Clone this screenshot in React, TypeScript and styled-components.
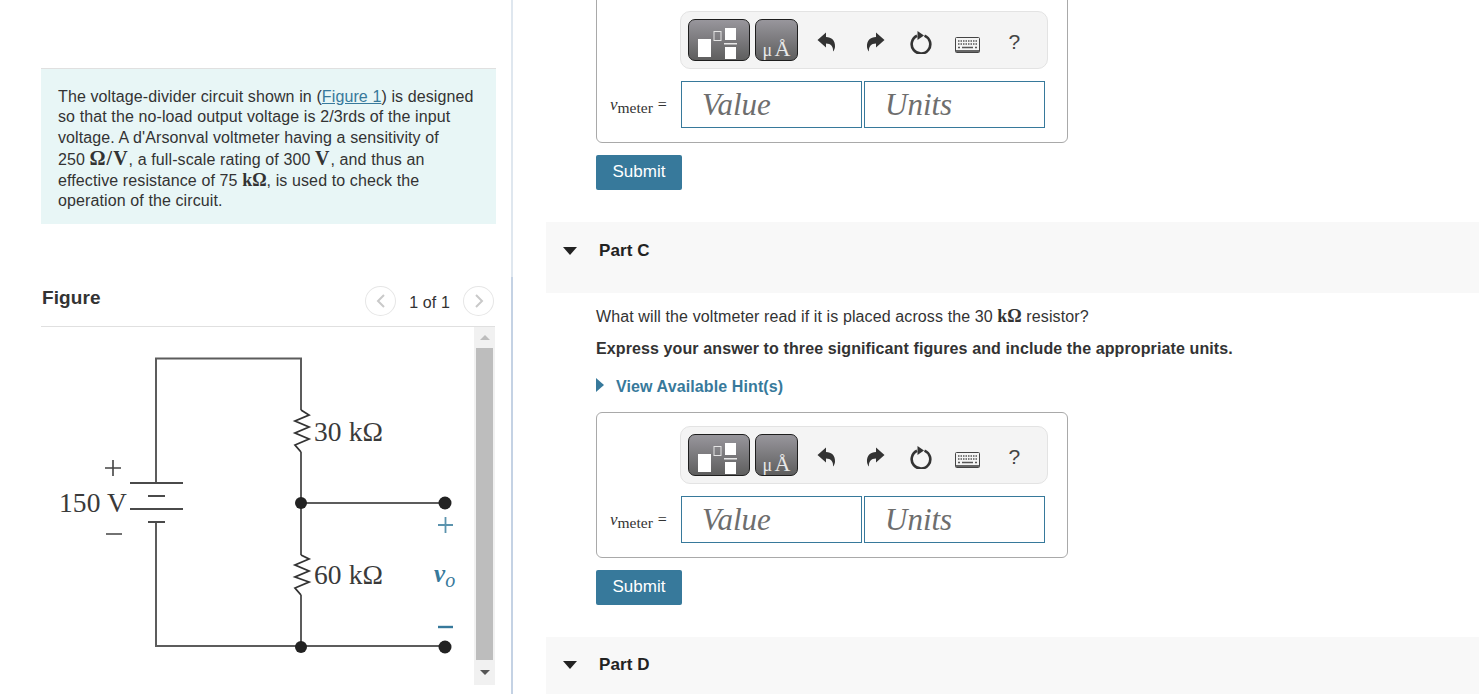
import React from 'react';
import styled, { createGlobalStyle } from 'styled-components';

const GlobalStyle = createGlobalStyle`
  html, body {
    margin: 0;
    padding: 0;
    background: #fff;
    overflow: hidden;
  }
  * {
    box-sizing: border-box;
  }
`;

const Page = styled.div`
  display: flex;
  width: 1479px;
  height: 694px;
  overflow: hidden;
  font-family: "Liberation Sans", Arial, sans-serif;
  font-size: 16px;
  letter-spacing: 0.11px;
  color: #333;
`;

const LeftPanel = styled.div`
  position: relative;
  flex: none;
  width: 513px;
  padding: 68px 16px 0 41px;
  border-right: 2px solid #dfe7ef;

  &::after {
    content: '';
    position: absolute;
    top: 277px;
    bottom: 0;
    right: -2px;
    width: 2px;
    background: #c4d2e4;
  }
`;

const IntroCard = styled.div`
  height: 156px;
  margin-right: -1px;
  padding: 18px 16px 0 17px;
  background: #e8f6f6;
  border-top: 1px solid #e0e0e0;
  line-height: 20.4px;
`;

const FigureLink = styled.a`
  color: #37799b;
  text-decoration: underline;
`;

const MathUnit = styled.span<{ $wide?: boolean }>`
  font-family: "Liberation Serif", serif;
  font-weight: bold;
  font-size: ${props => (props.$wide ? 20 : 18)}px;
  letter-spacing: ${props => (props.$wide ? 1 : 0)}px;
  line-height: 1;
  white-space: nowrap;
`;

const FigureHeader = styled.div`
  display: flex;
  align-items: center;
  justify-content: space-between;
  height: 103px;
  padding-top: 52px;
  padding-left: 1px;
  border-bottom: 1px solid #e0e0e0;
`;

const FigureTitle = styled.div`
  font-size: 19px;
  font-weight: bold;
  margin-top: -7px;
`;

const Pager = styled.div`
  display: flex;
  align-items: center;
  gap: 13px;
  margin-right: 1px;
`;

const PagerLabel = styled.span`
  margin-top: 3px;
`;

const PagerButton = styled.span`
  display: flex;
  align-items: center;
  justify-content: center;
  width: 31px;
  height: 30px;
  border: 1px solid #e6e6e6;
  border-radius: 50%;
`;

const FigureBody = styled.div`
  display: flex;
  height: 358px;
`;

const CircuitWrap = styled.div`
  flex: 1;
  min-width: 0;
`;

const ScrollTrack = styled.div`
  display: flex;
  flex-direction: column;
  align-items: center;
  flex: none;
  width: 21px;
  height: 358px;
  background: #f1f1f1;
`;

const ScrollButton = styled.div<{ $h: number }>`
  display: flex;
  align-items: center;
  justify-content: center;
  flex: none;
  width: 100%;
  height: ${props => props.$h}px;
`;

const ScrollThumb = styled.div`
  flex: none;
  width: 17px;
  height: 312px;
  background: #bdbdbd;
`;

const RightPanel = styled.div`
  flex: 1;
  min-width: 0;
  padding-left: 33px;
`;

const PartBody = styled.div`
  padding-left: 50px;
`;

const AnswerBox = styled.div<{ $top: number; $pad: number }>`
  width: 472px;
  height: ${props => props.$pad + 133}px;
  margin-top: ${props => props.$top}px;
  padding: ${props => props.$pad}px 0 0 84px;
  border: 1px solid #a9a9a9;
  border-radius: 6px;
`;

const Toolbar = styled.div`
  display: flex;
  align-items: center;
  width: 368px;
  height: 58px;
  margin-left: -1px;
  padding-left: 7px;
  background: #f4f4f4;
  border: 1px solid #e3e3e3;
  border-radius: 10px;
`;

const TemplateButton = styled.div<{ $w: number }>`
  display: flex;
  align-items: center;
  justify-content: center;
  flex: none;
  width: ${props => props.$w}px;
  height: 42px;
  margin-right: 5px;
  background: linear-gradient(#98969c, #5e5e5e);
  border: 1px solid #1e1e1e;
  border-radius: 7px;
`;

const UnitGlyphs = styled.div`
  display: flex;
  align-items: baseline;
  gap: 2px;
  margin-top: 17px;
  font-family: "Liberation Serif", serif;
  color: #e8e8e8;
  line-height: 1;
`;

const MicroGlyph = styled.span`
  font-size: 18px;
`;

const AngstromGlyph = styled.span`
  font-size: 22px;
`;

const ToolCell = styled.div<{ $drop: number }>`
  display: flex;
  align-items: center;
  justify-content: center;
  flex: none;
  width: 47px;
  height: 100%;
  padding-top: ${props => props.$drop}px;
  color: #333;
`;

const HelpGlyph = styled.span`
  font-size: 21px;
  color: #444;
`;

const AnswerRow = styled.div`
  display: flex;
  align-items: center;
  margin-top: 12px;
`;

const AnswerLabel = styled.div`
  flex: none;
  width: 73px;
  margin-left: -84px;
  margin-right: 11px;
  padding-left: 13px;
  font-family: "Liberation Serif", serif;
  font-size: 16px;
  letter-spacing: 0;
  white-space: nowrap;
`;

const Italic = styled.i`
  font-size: 17px;
`;

const Sub = styled.sub`
  font-size: 15.5px;
  line-height: 0;
  vertical-align: -3px;
`;

const EqualsSign = styled.span`
  margin-left: 5px;
`;

const AnswerInput = styled.input`
  flex: none;
  width: 181px;
  height: 47px;
  margin-right: 2px;
  padding: 0 0 0 20px;
  background: #fff;
  border: 1px solid #37799b;
  border-radius: 0;
  outline: none;
  font-family: "Liberation Serif", serif;
  font-size: 31px;
  font-style: italic;

  &::placeholder {
    color: #6e6e6e;
    opacity: 1;
  }
`;

const SubmitButton = styled.button`
  display: block;
  width: 86px;
  height: 35px;
  margin-top: 12px;
  padding: 0 0 2px;
  background: #37799b;
  border: none;
  border-radius: 2px;
  color: #fff;
  font-family: "Liberation Sans", Arial, sans-serif;
  font-size: 17px;
`;

const PartHeader = styled.div<{ $h: number; $top: number; $pb: number }>`
  display: flex;
  align-items: center;
  height: ${props => props.$h}px;
  margin-top: ${props => props.$top}px;
  padding: 0 0 ${props => props.$pb}px 17px;
  background: #f8f8f8;
`;

const PartTitle = styled.div`
  margin-left: 22px;
  font-size: 17px;
  font-weight: bold;
  color: #222;
`;

const Question = styled.p`
  margin: 14px 0 0;
  line-height: 18px;
`;

const Instruction = styled.p`
  margin: 14px 0 0;
  line-height: 18px;
  font-weight: bold;
`;

const HintRow = styled.div`
  display: flex;
  align-items: center;
  gap: 12px;
  margin-top: 20px;
  line-height: 18px;
  font-weight: bold;
  color: #37799b;
`;

const CollapseTriangle = () => (
  <svg width="14" height="8" viewBox="0 0 14 8">
    <path d="M0 0H14L7 8Z" fill="#222" />
  </svg>
);

const HintTriangle = () => (
  <svg width="8" height="14" viewBox="0 0 8 14" style={{ marginTop: -4 }}>
    <path d="M0 0L8 7L0 14Z" fill="#37799b" />
  </svg>
);

const Chevron = ({ dir }: { dir: 'left' | 'right' }) => (
  <svg width="12" height="16" viewBox="0 0 12 16">
    <path
      d={dir === 'left' ? 'M9 2L3 8L9 14' : 'M3 2L9 8L3 14'}
      fill="none"
      stroke="#c9c9c9"
      strokeWidth="2"
    />
  </svg>
);

const FractionIcon = () => (
  <svg width="60" height="40" viewBox="0 0 60 40">
    <rect x="9" y="19" width="13" height="18" fill="#fff" />
    <rect x="25" y="11.5" width="7" height="9" fill="none" stroke="#e4e4e4" />
    <rect x="36" y="8" width="11" height="12" fill="#fff" />
    <rect x="35" y="23" width="13" height="1.5" fill="#e8e8e8" />
    <rect x="36" y="27" width="11" height="12" fill="#fff" />
  </svg>
);

const UndoIcon = ({ flip }: { flip?: boolean }) => (
  <svg
    width="19"
    height="20"
    viewBox="0 0 19 20"
    style={flip ? { transform: 'scaleX(-1)', marginLeft: 4 } : undefined}
  >
    <path
      d="M0.5 8L9 0.5V5C14.5 5 18.5 8.5 18 15C17.8 16.8 17 18.5 16 19.5C16.5 15 14 11.5 9 11.5V15.5Z"
      fill="#333"
    />
  </svg>
);

const ResetIcon = () => (
  <svg width="22" height="23" viewBox="0 0 22 23">
    <path
      d="M7 4.8A9.3 9.3 0 1 0 14.5 4.6"
      fill="none"
      stroke="#333"
      strokeWidth="2.6"
    />
    <path d="M7.5 0L14 4.5L7.5 9Z" fill="#333" />
  </svg>
);

const KeyboardIcon = () => (
  <svg width="25" height="16" viewBox="0 0 25 16">
    <rect x="0.5" y="0.5" width="24" height="15" rx="1" fill="#f4f4f4" stroke="#444" />
    <path d="M3 4H22M3 7H22" stroke="#555" strokeWidth="1.5" strokeDasharray="1.5 1" />
    <path d="M3 10.5H5M7 10.5H18M20 10.5H22" stroke="#555" strokeWidth="1.5" />
    <rect x="1" y="13" width="23" height="2" fill="#666" />
  </svg>
);

const Circuit = () => (
  <svg width="433" height="358" viewBox="41 327 433 358">
    <g fill="none" stroke="#5c5c5c" strokeWidth="2">
      <path d="M156 483V358.5H301V410" />
      <path d="M156 522V646H445" />
      <path d="M301 452V555M301 595V646M301 503H445" />
      <path d="M130 483H183M148 496H165M130 509H183M148 522H165" stroke="#4a4a4a" />
      <path
        d="M301 410L309 415L295 421L309 427L295 433L309 439L295 445L301 452"
        stroke="#333"
        strokeWidth="1.8"
      />
      <path
        d="M301 555L309 559L295 565L309 571L295 577L309 582L295 588L301 595"
        stroke="#333"
        strokeWidth="1.8"
      />
      <path d="M105 468H121M113 460V476M106 534H122" stroke="#444" strokeWidth="1.6" />
      <path d="M438 525H453M445.5 517V533" stroke="#5b93ad" strokeWidth="1.8" />
      <path d="M438 627H453" stroke="#37799b" strokeWidth="2.4" />
    </g>
    <g fill="#222">
      <circle cx="301" cy="503" r="6" />
      <circle cx="445" cy="503" r="6.5" />
      <circle cx="301" cy="647" r="6" />
      <circle cx="445" cy="647" r="6.5" />
    </g>
    <g fontFamily="'Liberation Serif', serif" fontSize="27.5" fill="#3a3a3a">
      <text x="59" y="512">150 V</text>
      <text x="314" y="441">30 kΩ</text>
      <text x="314" y="584">60 kΩ</text>
    </g>
    <text
      x="434"
      y="582"
      fontFamily="'Liberation Serif', serif"
      fontSize="25"
      fontStyle="italic"
      fontWeight="bold"
      fill="#37799b"
    >
      v<tspan fontSize="20" dy="5" fontWeight="normal">o</tspan>
    </text>
  </svg>
);

const ToolbarRow = () => (
  <Toolbar>
    <TemplateButton $w={62}>
      <FractionIcon />
    </TemplateButton>
    <TemplateButton $w={43}>
      <UnitGlyphs>
        <MicroGlyph>μ</MicroGlyph>
        <AngstromGlyph>Å</AngstromGlyph>
      </UnitGlyphs>
    </TemplateButton>
    <ToolCell $drop={4}>
      <UndoIcon />
    </ToolCell>
    <ToolCell $drop={4}>
      <UndoIcon flip />
    </ToolCell>
    <ToolCell $drop={5}>
      <ResetIcon />
    </ToolCell>
    <ToolCell $drop={10}>
      <KeyboardIcon />
    </ToolCell>
    <ToolCell $drop={4}>
      <HelpGlyph>?</HelpGlyph>
    </ToolCell>
  </Toolbar>
);

const Answer = ({ top, pad }: { top: number; pad: number }) => (
  <>
    <AnswerBox $top={top} $pad={pad}>
      <ToolbarRow />
      <AnswerRow>
        <AnswerLabel>
          <Italic>v</Italic>
          <Sub>meter</Sub>
          <EqualsSign>=</EqualsSign>
        </AnswerLabel>
        <AnswerInput placeholder="Value" />
        <AnswerInput placeholder="Units" />
      </AnswerRow>
    </AnswerBox>
    <SubmitButton>Submit</SubmitButton>
  </>
);

export default function App() {
  return (
    <Page>
      <GlobalStyle />
      <LeftPanel>
        <IntroCard>
          The voltage-divider circuit shown in (<FigureLink>Figure 1</FigureLink>) is designed so
          that the no-load output voltage is 2/3rds of the input voltage. A d'Arsonval voltmeter
          having a sensitivity of 250&nbsp;<MathUnit $wide>Ω/V</MathUnit>, a full-scale rating of
          300&nbsp;<MathUnit $wide>V</MathUnit>, and thus an effective resistance of 75&nbsp;
          <MathUnit>kΩ</MathUnit>, is used to check the operation of the circuit.
        </IntroCard>
        <FigureHeader>
          <FigureTitle>Figure</FigureTitle>
          <Pager>
            <PagerButton>
              <Chevron dir="left" />
            </PagerButton>
            <PagerLabel>1 of 1</PagerLabel>
            <PagerButton>
              <Chevron dir="right" />
            </PagerButton>
          </Pager>
        </FigureHeader>
        <FigureBody>
          <CircuitWrap>
            <Circuit />
          </CircuitWrap>
          <ScrollTrack>
            <ScrollButton $h={21}>
              <svg width="10" height="5" viewBox="0 0 10 5">
                <path d="M0 5L5 0L10 5Z" fill="#bdbdbd" />
              </svg>
            </ScrollButton>
            <ScrollThumb />
            <ScrollButton $h={25}>
              <svg width="10" height="5" viewBox="0 0 10 5">
                <path d="M0 0L5 5L10 0Z" fill="#555" />
              </svg>
            </ScrollButton>
          </ScrollTrack>
        </FigureBody>
      </LeftPanel>
      <RightPanel>
        <PartBody>
          <Answer top={-7} pad={17} />
        </PartBody>
        <PartHeader $h={71} $top={32} $pb={14}>
          <CollapseTriangle />
          <PartTitle>Part C</PartTitle>
        </PartHeader>
        <PartBody>
          <Question>
            What will the voltmeter read if it is placed across the 30&nbsp;
            <MathUnit>kΩ</MathUnit> resistor?
          </Question>
          <Instruction>Express your answer to three significant figures and include the appropriate units.</Instruction>
          <HintRow>
            <HintTriangle />
            View Available Hint(s)
          </HintRow>
          <Answer top={16} pad={13} />
        </PartBody>
        <PartHeader $h={57} $top={32} $pb={2}>
          <CollapseTriangle />
          <PartTitle>Part D</PartTitle>
        </PartHeader>
      </RightPanel>
    </Page>
  );
}
